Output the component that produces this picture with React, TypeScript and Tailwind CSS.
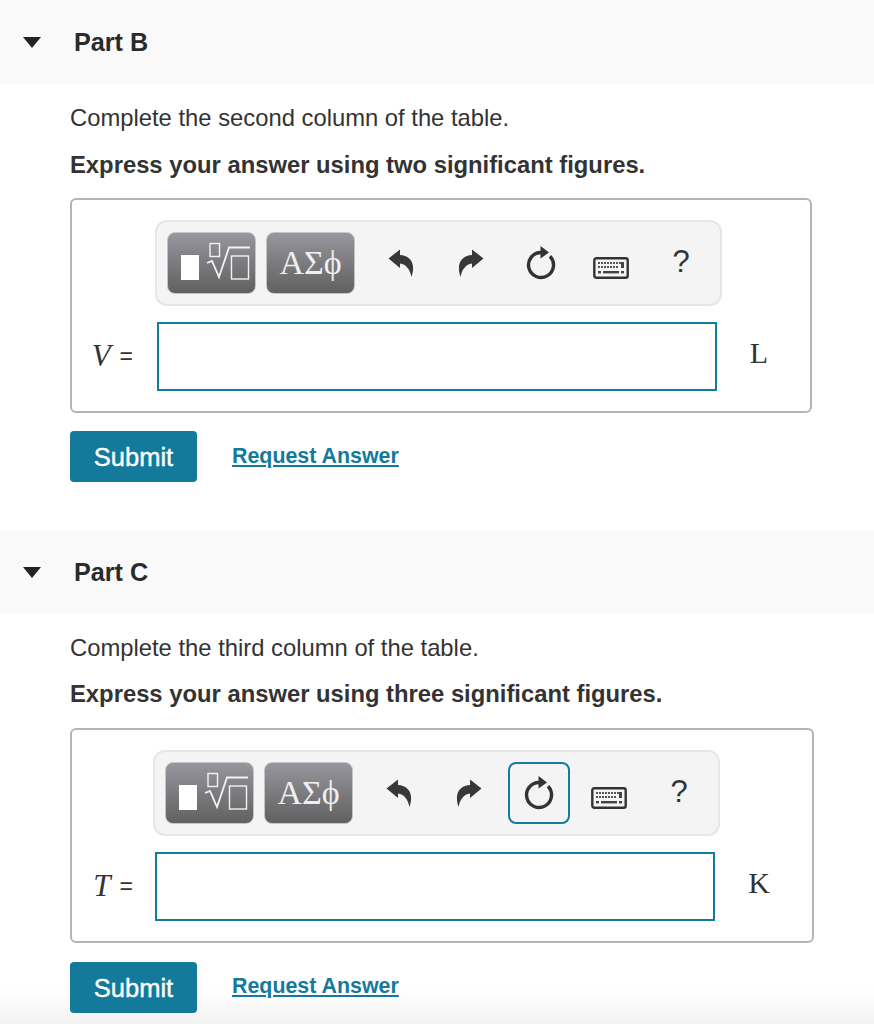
const sans = { fontFamily: '"Liberation Sans", Arial, sans-serif' };

function MathIcon() {
  return (
    <svg width="89" height="62" viewBox="0 0 89 62" fill="none" stroke="#f2f2f2" strokeWidth="1.4" className="-m-px block">
      <rect x="14" y="23" width="18" height="25" fill="#fff" stroke="none" />
      <rect x="43" y="11.5" width="9.5" height="13" />
      <path d="M40 31 L45 29 L52 45 L62 15.5 L83 15.5" strokeWidth="1.8" />
      <rect x="64.5" y="24" width="17" height="23" />
    </svg>
  );
}

function UndoIcon({ flip }: { flip?: boolean }) {
  return (
    <svg width="26" height="29" viewBox="0 0 26 29" className={flip ? "-scale-x-100" : ""}>
      <path d="M0.5 9.5 L12 0.5 V6 C21 6.5 28.5 13 23.5 28 C22 20.5 18 15 12 14.5 V19 Z" fill="#383838" />
    </svg>
  );
}

function ResetIcon() {
  return (
    <svg width="32" height="36" viewBox="0 0 32 36" fill="none">
      <path d="M16 7.5 A12.5 12.5 0 1 0 25 11.3" stroke="#333" strokeWidth="3.4" />
      <path d="M15.5 1 L24 7.5 L15.5 13.5 Z" fill="#333" />
    </svg>
  );
}

function KeyboardIcon() {
  const top = [5, 8, 11, 14, 17, 20, 23, 26];
  const mid = [5, 8, 11, 14, 17, 20, 23];
  return (
    <svg width="36" height="22" viewBox="0 0 36 22" fill="none" className="mt-[9px]">
      <rect x="1.3" y="1.3" width="33.4" height="19.4" rx="2" stroke="#333" strokeWidth="2.4" />
      {top.map((x) => <rect key={x} x={x} y="5" width="2" height="2" fill="#555" />)}
      {mid.map((x) => <rect key={x} x={x} y="9" width="2" height="2" fill="#555" />)}
      <rect x="28" y="5" width="3" height="6" fill="#444" />
      <rect x="5" y="14" width="3" height="2.4" fill="#444" />
      <rect x="10" y="14" width="16" height="2.4" fill="#444" />
      <rect x="28" y="14" width="3" height="2.4" fill="#444" />
    </svg>
  );
}

const slot = "flex h-[62px] w-[62px] items-center justify-center rounded-lg";
const dark = "h-[62px] w-[89px] rounded-lg border border-[#c4c4c4] bg-gradient-to-b from-[#98969e] to-[#616161]";

function Part(props: {
  name: string;
  line: string;
  hint: string;
  label: string;
  unit: string;
  focused?: boolean;
  wide?: boolean;
  pb: string;
}) {
  const { name, line, hint, label, unit, focused, wide, pb } = props;
  return (
    <section className={pb}>
      <div className="flex h-[84px] items-center bg-[#f9f9f9] pl-[23px]">
        <span className="h-0 w-0 border-x-[9.5px] border-t-[11px] border-x-transparent border-t-[#222]" />
        <h2 className="ml-[33px] mt-[2px] text-[25.2px] font-bold text-[#2b2b2b]">{name}</h2>
      </div>
      <div className="px-[70px]">
        <p className="mt-[19px] text-[23.8px] leading-[30px] text-[#333]">{line}</p>
        <p className={`${wide ? "mt-4" : "mt-[17px]"} text-[23.8px] font-bold leading-[30px] text-[#333]`}>{hint}</p>
        <div className={`${wide ? "mt-[19px] mr-[-9px] w-[744px]" : "mt-[18px] mr-[-7px] w-[742px]"} flex h-[215px] rounded-md border-2 border-[#b4b4b4] bg-white`}>
          <div className="flex flex-col">
            <div className={`flex h-[86px] w-[567px] items-center rounded-xl border-2 border-[#e6e6e6] bg-[#f4f4f4] pl-[10px] ${wide ? "ml-[81px]" : "ml-[83px]"} mt-5`}>
              <button className={dark}><MathIcon /></button>
              <button className={`${dark} ml-[10px] font-['Liberation_Serif'] text-[34px] leading-none text-[#efefef]`}>ΑΣϕ</button>
              <div className="ml-[15px] flex gap-2">
                <span className={slot}><UndoIcon /></span>
                <span className={slot}><UndoIcon flip /></span>
                <span className={`${slot} ${focused ? "border-2 border-[#137b9c]" : ""}`}><ResetIcon /></span>
                <span className={slot}><KeyboardIcon /></span>
                <span className={`${slot} pb-[2px] text-[31px] text-[#333]`}>?</span>
              </div>
            </div>
            <div className="mt-4 flex items-center">
              <div className={`flex items-center justify-end text-[#333] ${wide ? "w-[83px] pr-[22px]" : "w-[85px] pr-[24px]"}`}>
                <i className="-mt-[3px] font-['Liberation_Serif'] text-[31px] leading-none">{label}</i>
                <span className="ml-[9px] text-[23px] leading-none">=</span>
              </div>
              <input className="h-[69px] w-[560px] border-2 border-[#137b9c] bg-white outline-none" />
            </div>
          </div>
          <div className="flex flex-1 items-end justify-center pb-[36px] pr-[14px] font-['Liberation_Serif'] text-[30px] leading-[45px] text-[#333]">{unit}</div>
        </div>
        <div className={`${wide ? "mt-[19px]" : "mt-[18px]"} flex items-center`}>
          <button className="h-[51px] w-[127px] rounded bg-[#137a9b] pt-[2px] text-[25.5px] text-white [-webkit-text-stroke:0.4px_white]">Submit</button>
          <a href="#" className={`${wide ? "-mt-[2px]" : ""} ml-[35px] text-[21.4px] font-bold text-[#137a9b] underline`}>Request Answer</a>
        </div>
      </div>
    </section>
  );
}

export default function App() {
  return (
    <div className="h-[1024px] overflow-hidden bg-gradient-to-b from-white from-[96.5%] to-[#f2f2f2]" style={sans}>
      <Part
        name="Part B"
        line="Complete the second column of the table."
        hint="Express your answer using two significant figures."
        label="V"
        unit="L"
        pb="h-[530px]"
      />
      <Part
        name="Part C"
        line="Complete the third column of the table."
        hint="Express your answer using three significant figures."
        label="T"
        unit="K"
        focused
        wide
        pb="h-[494px]"
      />
    </div>
  );
}
